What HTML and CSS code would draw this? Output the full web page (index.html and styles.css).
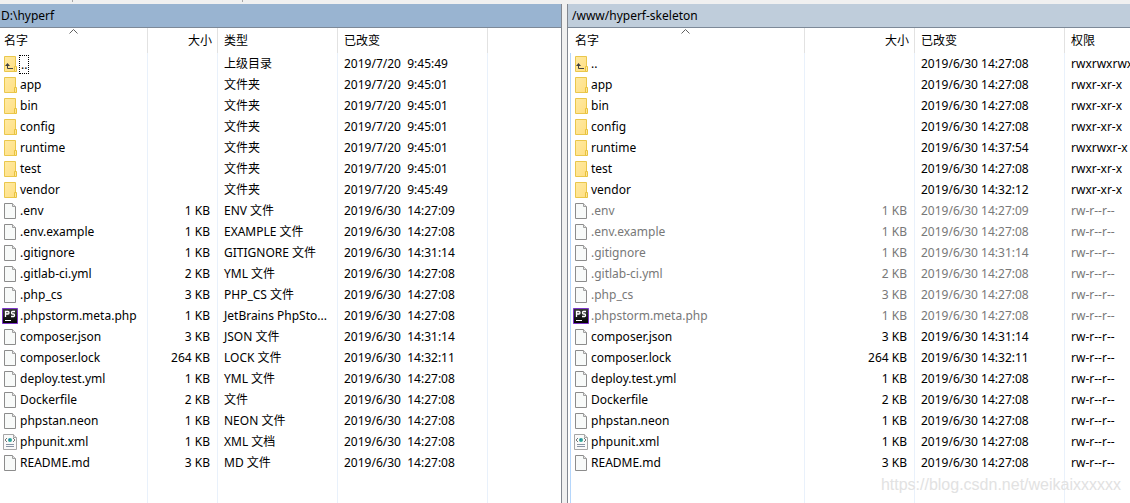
FILE: index.html
```html
<!DOCTYPE html>
<html lang="zh">
<head>
    <meta charset="utf-8">
    <title>hyperf-skeleton</title>
    <link rel="stylesheet" href="styles.css">
</head>
<body>
    <svg class="sprites" aria-hidden="true">
        <defs>
            <linearGradient id="folder-fill" x1="0" y1="0" x2="1" y2="1">
                <stop offset="0" stop-color="#ffeaa2"/>
                <stop offset="1" stop-color="#ffdf83"/>
            </linearGradient>
            <linearGradient id="ps-fill" x1="0" y1="0" x2="0" y2="1">
                <stop offset="0" stop-color="#3a3a3a"/>
                <stop offset="1" stop-color="#000"/>
            </linearGradient>
        </defs>
        <symbol id="folder" viewBox="0 0 16 16">
            <path d="M2.5.5h11v15h-11z" fill="url(#folder-fill)" stroke="#eac74c"/>
            <path d="M12.5 10.5h2v5h-2z" fill="#ffe798" stroke="#e8c23f"/>
        </symbol>
        <symbol id="up" viewBox="0 0 16 16">
            <use href="#folder"/>
            <path d="M5.5 8v4.5H11" fill="none" stroke="#404040"/>
            <path d="M3 10L5.5 7 8 10z" fill="#404040"/>
        </symbol>
        <symbol id="file" viewBox="0 0 16 16">
            <path d="M2.5.5h8l3 3v12h-11z" fill="#f8faf9" stroke="#8c8c8c"/>
            <path d="M10.5.5v3h3" fill="#e4e4e4" stroke="#a0a0a0"/>
        </symbol>
        <symbol id="xml" viewBox="0 0 16 16">
            <path d="M1.5.5h10l3 3v12h-13z" fill="#fafafa" stroke="#a6a6a6"/>
            <path d="M11.5.5v3h3" fill="#e4e4e4" stroke="#a6a6a6"/>
            <path d="M5 4L3 6l2 2M11 4L13 6l-2 2" fill="none" stroke="#777"/>
            <circle cx="8" cy="6" r="2" fill="#31a59a"/>
            <path d="M7 6l1-1" stroke="#2670b8"/>
            <path d="M4 10.5h8M4 12.5h8" stroke="#8a95a5"/>
        </symbol>
        <symbol id="ps" viewBox="0 0 16 16">
            <path d="M.5.5h15v15H.5z" fill="url(#ps-fill)" stroke="#7c35c9"/>
            <path d="M3.5 9V3.5H6q1 0 1 1.250T6 6H4M13 3.500h-2.500q-1 0-1 1.250t1 1.250h1q1 0 1 1.250t-1 1.250H9" fill="none" stroke="#fff" stroke-width="1.300"/>
            <path d="M3 12.5h6" stroke="#fff"/>
        </symbol>
    </svg>

    <div class="toolbar">
        <span class="tick"></span>
        <span class="tick"></span>
    </div>

    <main class="panes">
        <section class="pane local">
            <div class="path">D:\hyperf</div>
            <table class="files">
                <colgroup><col class="col-name"><col class="col-size"><col class="col-type"><col class="col-date"><col></colgroup>
                <thead>
                    <tr>
                        <th class="name">名字<svg class="caret" viewBox="0 0 9 5"><path d="M.5 4.500l4-4 4 4" fill="none" stroke="#606060"/></svg></th>
                        <th class="size">大小</th><th>类型</th><th>已改变</th><th></th>
                    </tr>
                </thead>
                <tbody>
                    <tr><td class="name"><svg class="icon"><use href="#up"/></svg><span class="focus">..</span></td><td class="size"></td><td>上级目录</td><td>2019/7/20  9:45:49</td><td></td></tr>
                    <tr><td class="name"><svg class="icon"><use href="#folder"/></svg>app</td><td class="size"></td><td>文件夹</td><td>2019/7/20  9:45:01</td><td></td></tr>
                    <tr><td class="name"><svg class="icon"><use href="#folder"/></svg>bin</td><td class="size"></td><td>文件夹</td><td>2019/7/20  9:45:01</td><td></td></tr>
                    <tr><td class="name"><svg class="icon"><use href="#folder"/></svg>config</td><td class="size"></td><td>文件夹</td><td>2019/7/20  9:45:01</td><td></td></tr>
                    <tr><td class="name"><svg class="icon"><use href="#folder"/></svg>runtime</td><td class="size"></td><td>文件夹</td><td>2019/7/20  9:45:01</td><td></td></tr>
                    <tr><td class="name"><svg class="icon"><use href="#folder"/></svg>test</td><td class="size"></td><td>文件夹</td><td>2019/7/20  9:45:01</td><td></td></tr>
                    <tr><td class="name"><svg class="icon"><use href="#folder"/></svg>vendor</td><td class="size"></td><td>文件夹</td><td>2019/7/20  9:45:49</td><td></td></tr>
                    <tr><td class="name"><svg class="icon"><use href="#file"/></svg>.env</td><td class="size">1 KB</td><td>ENV 文件</td><td>2019/6/30  14:27:09</td><td></td></tr>
                    <tr><td class="name"><svg class="icon"><use href="#file"/></svg>.env.example</td><td class="size">1 KB</td><td>EXAMPLE 文件</td><td>2019/6/30  14:27:08</td><td></td></tr>
                    <tr><td class="name"><svg class="icon"><use href="#file"/></svg>.gitignore</td><td class="size">1 KB</td><td>GITIGNORE 文件</td><td>2019/6/30  14:31:14</td><td></td></tr>
                    <tr><td class="name"><svg class="icon"><use href="#file"/></svg>.gitlab-ci.yml</td><td class="size">2 KB</td><td>YML 文件</td><td>2019/6/30  14:27:08</td><td></td></tr>
                    <tr><td class="name"><svg class="icon"><use href="#file"/></svg>.php_cs</td><td class="size">3 KB</td><td>PHP_CS 文件</td><td>2019/6/30  14:27:08</td><td></td></tr>
                    <tr><td class="name"><svg class="icon"><use href="#ps"/></svg>.phpstorm.meta.php</td><td class="size">1 KB</td><td>JetBrains PhpSto...</td><td>2019/6/30  14:27:08</td><td></td></tr>
                    <tr><td class="name"><svg class="icon"><use href="#file"/></svg>composer.json</td><td class="size">3 KB</td><td>JSON 文件</td><td>2019/6/30  14:31:14</td><td></td></tr>
                    <tr><td class="name"><svg class="icon"><use href="#file"/></svg>composer.lock</td><td class="size">264 KB</td><td>LOCK 文件</td><td>2019/6/30  14:32:11</td><td></td></tr>
                    <tr><td class="name"><svg class="icon"><use href="#file"/></svg>deploy.test.yml</td><td class="size">1 KB</td><td>YML 文件</td><td>2019/6/30  14:27:08</td><td></td></tr>
                    <tr><td class="name"><svg class="icon"><use href="#file"/></svg>Dockerfile</td><td class="size">2 KB</td><td>文件</td><td>2019/6/30  14:27:08</td><td></td></tr>
                    <tr><td class="name"><svg class="icon"><use href="#file"/></svg>phpstan.neon</td><td class="size">1 KB</td><td>NEON 文件</td><td>2019/6/30  14:27:08</td><td></td></tr>
                    <tr><td class="name"><svg class="icon"><use href="#xml"/></svg>phpunit.xml</td><td class="size">1 KB</td><td>XML 文档</td><td>2019/6/30  14:27:08</td><td></td></tr>
                    <tr><td class="name"><svg class="icon"><use href="#file"/></svg>README.md</td><td class="size">3 KB</td><td>MD 文件</td><td>2019/6/30  14:27:08</td><td></td></tr>
                    <tr class="filler"><td></td><td></td><td></td><td></td><td></td></tr>
                </tbody>
            </table>
        </section>

        <section class="pane remote">
            <div class="path">/www/hyperf-skeleton</div>
            <table class="files">
                <colgroup><col class="col-name"><col class="col-size"><col class="col-date"><col></colgroup>
                <thead>
                    <tr>
                        <th class="name">名字<svg class="caret" viewBox="0 0 9 5"><path d="M.5 4.500l4-4 4 4" fill="none" stroke="#606060"/></svg></th>
                        <th class="size">大小</th><th>已改变</th><th>权限</th>
                    </tr>
                </thead>
                <tbody>
                    <tr><td class="name"><svg class="icon"><use href="#up"/></svg>..</td><td class="size"></td><td>2019/6/30 14:27:08</td><td>rwxrwxrwx</td></tr>
                    <tr><td class="name"><svg class="icon"><use href="#folder"/></svg>app</td><td class="size"></td><td>2019/6/30 14:27:08</td><td>rwxr-xr-x</td></tr>
                    <tr><td class="name"><svg class="icon"><use href="#folder"/></svg>bin</td><td class="size"></td><td>2019/6/30 14:27:08</td><td>rwxr-xr-x</td></tr>
                    <tr><td class="name"><svg class="icon"><use href="#folder"/></svg>config</td><td class="size"></td><td>2019/6/30 14:27:08</td><td>rwxr-xr-x</td></tr>
                    <tr><td class="name"><svg class="icon"><use href="#folder"/></svg>runtime</td><td class="size"></td><td>2019/6/30 14:37:54</td><td>rwxrwxr-x</td></tr>
                    <tr><td class="name"><svg class="icon"><use href="#folder"/></svg>test</td><td class="size"></td><td>2019/6/30 14:27:08</td><td>rwxr-xr-x</td></tr>
                    <tr><td class="name"><svg class="icon"><use href="#folder"/></svg>vendor</td><td class="size"></td><td>2019/6/30 14:32:12</td><td>rwxr-xr-x</td></tr>
                    <tr class="hidden-file"><td class="name"><svg class="icon"><use href="#file"/></svg>.env</td><td class="size">1 KB</td><td>2019/6/30 14:27:09</td><td>rw-r--r--</td></tr>
                    <tr class="hidden-file"><td class="name"><svg class="icon"><use href="#file"/></svg>.env.example</td><td class="size">1 KB</td><td>2019/6/30 14:27:08</td><td>rw-r--r--</td></tr>
                    <tr class="hidden-file"><td class="name"><svg class="icon"><use href="#file"/></svg>.gitignore</td><td class="size">1 KB</td><td>2019/6/30 14:31:14</td><td>rw-r--r--</td></tr>
                    <tr class="hidden-file"><td class="name"><svg class="icon"><use href="#file"/></svg>.gitlab-ci.yml</td><td class="size">2 KB</td><td>2019/6/30 14:27:08</td><td>rw-r--r--</td></tr>
                    <tr class="hidden-file"><td class="name"><svg class="icon"><use href="#file"/></svg>.php_cs</td><td class="size">3 KB</td><td>2019/6/30 14:27:08</td><td>rw-r--r--</td></tr>
                    <tr class="hidden-file"><td class="name"><svg class="icon"><use href="#ps"/></svg>.phpstorm.meta.php</td><td class="size">1 KB</td><td>2019/6/30 14:27:08</td><td>rw-r--r--</td></tr>
                    <tr><td class="name"><svg class="icon"><use href="#file"/></svg>composer.json</td><td class="size">3 KB</td><td>2019/6/30 14:31:14</td><td>rw-r--r--</td></tr>
                    <tr><td class="name"><svg class="icon"><use href="#file"/></svg>composer.lock</td><td class="size">264 KB</td><td>2019/6/30 14:32:11</td><td>rw-r--r--</td></tr>
                    <tr><td class="name"><svg class="icon"><use href="#file"/></svg>deploy.test.yml</td><td class="size">1 KB</td><td>2019/6/30 14:27:08</td><td>rw-r--r--</td></tr>
                    <tr><td class="name"><svg class="icon"><use href="#file"/></svg>Dockerfile</td><td class="size">2 KB</td><td>2019/6/30 14:27:08</td><td>rw-r--r--</td></tr>
                    <tr><td class="name"><svg class="icon"><use href="#file"/></svg>phpstan.neon</td><td class="size">1 KB</td><td>2019/6/30 14:27:08</td><td>rw-r--r--</td></tr>
                    <tr><td class="name"><svg class="icon"><use href="#xml"/></svg>phpunit.xml</td><td class="size">1 KB</td><td>2019/6/30 14:27:08</td><td>rw-r--r--</td></tr>
                    <tr><td class="name"><svg class="icon"><use href="#file"/></svg>README.md</td><td class="size">3 KB</td><td>2019/6/30 14:27:08</td><td>rw-r--r--</td></tr>
                    <tr class="filler"><td></td><td></td><td></td><td></td></tr>
                </tbody>
            </table>
        </section>
    </main>

    <div class="watermark">https://blog.csdn.net/weikaixxxxxx</div>
</body>
</html>
```

FILE: styles.css
```css
* {
    box-sizing: border-box;
}
body {
    margin: 0;
    height: 100vh;
    display: flex;
    flex-direction: column;
    overflow: hidden;
    background-color: #f0f0f0;
    color: #000;
    font-family: "Noto Sans", "Noto Sans CJK SC", sans-serif;
    font-size: 12px;
}
.sprites {
    position: absolute;
    width: 0;
    height: 0;
}
.toolbar {
    display: flex;
    gap: 169px;
    height: 4px;
    padding-left: 72px;
}
.tick {
    width: 1px;
    height: 2px;
    background-color: #a8a8a8;
}
.panes {
    flex: 1;
    min-height: 0;
    display: flex;
    gap: 5px;
}
.pane {
    display: flex;
    flex-direction: column;
    min-width: 0;
    overflow: hidden;
    background-color: #fff;
}
.local {
    width: calc(50% - 3px);
    border-right: 1px solid #828790;
}
.remote {
    flex: 1;
    border-left: 1px solid #828790;
}
.path {
    height: 24px;
    flex: none;
    padding-left: 1px;
    line-height: 23px;
    background-color: #99b4d1;
    border-bottom: 1px solid #7d8998;
}
.remote .path {
    padding-left: 4px;
    background-color: #bfcddb;
}

/* file lists */
.files {
    flex: 1;
    width: 100%;
    table-layout: fixed;
    border-collapse: separate;
    border-spacing: 0;
}
.col-name {
    width: 148px;
}
.remote .col-name {
    width: 237px;
}
.col-size {
    width: 70px;
}
.remote .col-size {
    width: 110px;
}
.col-type {
    width: 120px;
}
.col-date {
    width: 150px;
}
th,
td {
    height: 21px;
    padding: 0 0 0 6px;
    line-height: 20px;
    font-weight: normal;
    text-align: left;
    white-space: pre;
    border-right: 1px solid #e9f1fb;
}
th {
    position: relative;
    height: 25px;
    line-height: 24px;
    border-right-color: #e2e2e2;
}
th:last-child,
td:last-child {
    border-right: none;
}
.size {
    padding: 0 7px 0 0;
    text-align: right;
}
th.size {
    padding-right: 5px;
}
th.name {
    padding-left: 4px;
}
td.name {
    padding-left: 2px;
}
.remote th.name {
    padding-left: 7px;
}
.remote td.name {
    padding-left: 5px;
}
.remote td:first-child {
    background: linear-gradient(#b5d6fb, #b5d6fb) 2px 0 / 1px 100% no-repeat;
}
.filler td {
    height: auto;
}
.icon {
    width: 16px;
    height: 16px;
    margin-right: 2px;
    vertical-align: middle;
}
.caret {
    position: absolute;
    top: 1px;
    left: calc(50% - 5px);
    width: 9px;
    height: 5px;
}
.focus {
    display: inline-block;
    height: 19px;
    margin-left: -1px;
    padding: 0 1px;
    line-height: 17px;
    border: 1px dotted #000;
    vertical-align: middle;
}
.hidden-file {
    color: #787878;
}
.watermark {
    position: absolute;
    right: 9px;
    bottom: 8px;
    font-family: "Liberation Sans", Arial, sans-serif;
    font-size: 16px;
    line-height: 20px;
    color: #e2e2e2;
}
```
